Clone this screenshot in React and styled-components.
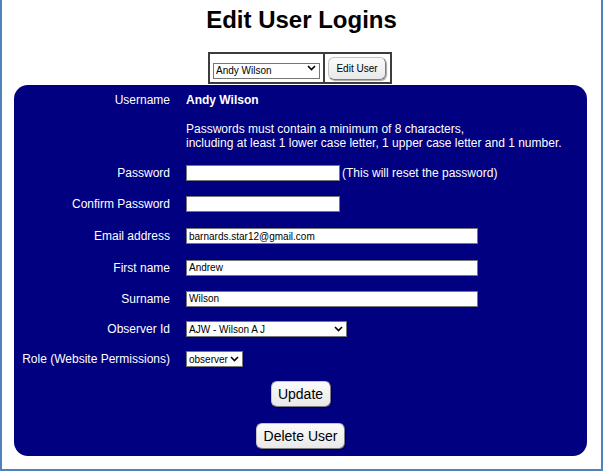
import React from "react";
import styled, { createGlobalStyle } from "styled-components";

const GlobalStyle = createGlobalStyle`
  * {
    margin: 0;
    padding: 0;
    box-sizing: border-box;
  }
  body {
    background: #fff;
    font-family: "Liberation Sans", Arial, sans-serif;
  }
`;

const Frame = styled.div`
  width: 603px;
  height: 471px;
  border: 2px solid #4f81bd;
  border-top: none;
  display: flex;
  flex-direction: column;
  align-items: stretch;
`;

const Title = styled.h1`
  margin-top: 6px;
  font-size: 24px;
  line-height: 28px;
  font-weight: bold;
  text-align: center;
  color: #000;
`;

const PickerWrap = styled.div`
  display: flex;
  justify-content: center;
  margin-top: 18px;
  padding-right: 3px;
`;

const Picker = styled.div`
  display: flex;
  height: 32px;
  border: 2px solid #3c3c3c;
`;

const PickerCell = styled.div`
  display: flex;
  align-items: center;
  width: ${(p) => p.w}px;
  padding: ${(p) => p.pad};
  border-right: ${(p) => (p.divider ? "2px solid #3c3c3c" : "none")};
`;

const SelectBox = styled.div`
  position: relative;
  width: ${(p) => p.w}px;
  height: 16px;
`;

const NativeSelect = styled.select`
  appearance: none;
  -webkit-appearance: none;
  width: 100%;
  height: 100%;
  font-family: "Liberation Sans", Arial, sans-serif;
  font-size: 10px;
  color: #000;
  background: #fff;
  border: 1px solid #767676;
  border-radius: 0;
  padding: 0 14px 0 2px;
  outline: none;
`;

const Chevron = styled.svg`
  position: absolute;
  right: 4px;
  top: 5px;
  width: 9px;
  height: 6px;
  pointer-events: none;
`;

function Select({ w, children, ...rest }) {
  return (
    <SelectBox w={w}>
      <NativeSelect {...rest}>{children}</NativeSelect>
      <Chevron viewBox="0 0 9 6">
        <path d="M1 1 L4.5 4.5 L8 1" fill="none" stroke="#000" strokeWidth="1.6" />
      </Chevron>
    </SelectBox>
  );
}

const Button = styled.button`
  width: ${(p) => p.w}px;
  height: ${(p) => p.h}px;
  font-family: "Liberation Sans", Arial, sans-serif;
  font-size: ${(p) => p.fs}px;
  color: #000;
  background: linear-gradient(#fbfbfb, #e9e9e9);
  border: 1px solid #c4c4c4;
  border-right-color: #7d7d7d;
  border-bottom-color: #7d7d7d;
  border-radius: 6px;
  box-shadow: 1px 1px 1px rgba(0, 0, 0, 0.35);
  cursor: pointer;
`;

const Panel = styled.div`
  margin: 1px 14px 0 12px;
  height: 371px;
  background: #000080;
  border-radius: 14px;
  color: #fff;
  font-size: 12px;
  display: flex;
  flex-direction: column;
`;

const Row = styled.div`
  display: grid;
  grid-template-columns: 156px 1fr;
  column-gap: 16px;
  align-items: center;
  height: ${(p) => p.h}px;
`;

const Label = styled.div`
  text-align: right;
  line-height: 14px;
`;

const Value = styled.div`
  display: flex;
  align-items: center;
  gap: 2px;
  line-height: 14px;
  font-weight: ${(p) => (p.bold ? "bold" : "normal")};
`;

const Note = styled.p`
  line-height: 14px;
`;

const Input = styled.input`
  width: ${(p) => p.w}px;
  height: 16px;
  font-family: "Liberation Sans", Arial, sans-serif;
  font-size: 10px;
  color: #000;
  background: #fff;
  border: 1px solid #767676;
  padding: 0 2px;
  outline: none;
`;

const Actions = styled.div`
  display: flex;
  flex-direction: column;
  align-items: center;
  gap: 16px;
  margin-top: 7px;
`;

export default function App() {
  return (
    <>
      <GlobalStyle />
      <Frame>
        <Title>Edit User Logins</Title>
        <PickerWrap>
          <Picker>
            <PickerCell w={115} pad="0 0 0 3px" divider>
              <Select w={107} defaultValue="Andy Wilson">
                <option>Andy Wilson</option>
              </Select>
            </PickerCell>
            <PickerCell w={65} pad="0 0 0 3px">
              <Button w={58} h={23} fs={10}>
                Edit User
              </Button>
            </PickerCell>
          </Picker>
        </PickerWrap>
        <Panel>
          <Row h={30}>
            <Label>Username</Label>
            <Value bold>Andy Wilson</Value>
          </Row>
          <Row h={42}>
            <span />
            <div>
              <Note>Passwords must contain a minimum of 8 characters,</Note>
              <Note>
                including at least 1 lower case letter, 1 upper case letter and 1 number.
              </Note>
            </div>
          </Row>
          <Row h={31}>
            <Label>Password</Label>
            <Value>
              <Input type="password" w={154} />
              <span>(This will reset the password)</span>
            </Value>
          </Row>
          <Row h={32}>
            <Label>Confirm Password</Label>
            <Value>
              <Input type="password" w={154} />
            </Value>
          </Row>
          <Row h={32}>
            <Label>Email address</Label>
            <Value>
              <Input w={292} defaultValue="barnards.star12@gmail.com" />
            </Value>
          </Row>
          <Row h={31}>
            <Label>First name</Label>
            <Value>
              <Input w={292} defaultValue="Andrew" />
            </Value>
          </Row>
          <Row h={31}>
            <Label>Surname</Label>
            <Value>
              <Input w={292} defaultValue="Wilson" />
            </Value>
          </Row>
          <Row h={30}>
            <Label>Observer Id</Label>
            <Value>
              <Select w={161} defaultValue="AJW">
                <option value="AJW">AJW - Wilson A J</option>
              </Select>
            </Value>
          </Row>
          <Row h={30}>
            <Label>Role (Website Permissions)</Label>
            <Value>
              <Select w={57} defaultValue="observer">
                <option value="observer">observer</option>
              </Select>
            </Value>
          </Row>
          <Actions>
            <Button w={60} h={26} fs={14}>
              Update
            </Button>
            <Button w={89} h={26} fs={14}>
              Delete User
            </Button>
          </Actions>
        </Panel>
      </Frame>
    </>
  );
}
